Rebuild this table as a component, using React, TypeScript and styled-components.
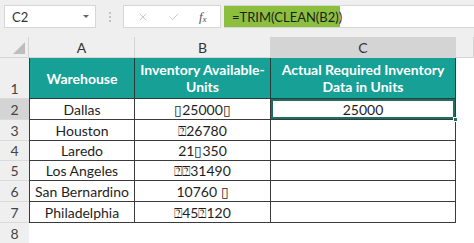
import React from "react"
import styled, { createGlobalStyle, css } from "styled-components"
import { X, Check } from "lucide-react"

const GlobalStyle = createGlobalStyle`
    html, body {
        margin: 0;
        padding: 0;
        background: #ffffff;
    }
    * {
        box-sizing: border-box;
    }
`

const Page = styled.div`
    width: 474px;
    height: 243px;
    overflow: hidden;
    background: #efefef;
    font-family: "Lato", "Open Sans", sans-serif;
    color: #222;
`

const FormulaBar = styled.div`
    height: 37px;
    display: flex;
    align-items: flex-start;
    padding: 5px 0 0 4px;
`

const NameBox = styled.div`
    width: 92px;
    height: 23px;
    background: #fff;
    border: 1px solid #d6d6d6;
    display: flex;
    align-items: center;
    justify-content: space-between;
    padding: 0 6px 0 7px;
    font-size: 13px;
    color: #333;
`

const Arrow = styled.span`
    width: 0;
    height: 0;
    border-left: 3px solid transparent;
    border-right: 3px solid transparent;
    border-top: 3px solid #666;
`

const Dots = styled.div`
    width: 27px;
    height: 23px;
    display: flex;
    flex-direction: column;
    align-items: center;
    justify-content: center;
    gap: 2px;

    span {
        width: 2px;
        height: 2px;
        border-radius: 50%;
        background: #b4b4b4;
    }
`

const ButtonBox = styled.div`
    width: 98px;
    height: 23px;
    background: #fff;
    border: 1px solid #d6d6d6;
    display: flex;
    align-items: center;
    justify-content: space-around;
    padding: 0 4px;
    color: #b5b5b5;
`

const Fx = styled.span`
    font-family: "Liberation Serif", serif;
    font-style: italic;
    font-size: 13px;
    color: #555;

    sub {
        font-size: 9px;
        vertical-align: -1px;
    }
`

const FormulaInput = styled.div`
    flex: 1;
    height: 23px;
    margin-left: 3px;
    background: #fff;
    border-top: 1px solid #d6d6d6;
    border-bottom: 1px solid #d6d6d6;
    display: flex;
`

const Highlight = styled.span`
    width: 116px;
    height: 100%;
    background: #8cbf3e;
    display: flex;
    align-items: center;
    padding-left: 8px;
    font-size: 13px;
    color: #1e1e1e;
`

const Sheet = styled.div`
    display: grid;
    grid-template-columns: 29px 106px 136px 185px 1fr;
    grid-template-rows: 21px 41px 21px 21px 20px 20px 21px 21px 21px;
`

type CellKind = "corner" | "colHead" | "rowHead" | "head" | "data" | "blank"

const Cell = styled.div<{ $kind: CellKind; $selected?: boolean; $first?: boolean; $active?: boolean }>`
    position: relative;
    display: flex;
    align-items: center;
    justify-content: center;
    text-align: center;
    font-size: 14px;
    line-height: 17px;

    ${({ $kind }) => $kind === "corner" && css`
        background: #efefef;
        border-right: 1px solid #d4d4d4;
        border-bottom: 1px solid #d4d4d4;
    `}

    ${({ $kind }) => $kind === "colHead" && css`
        background: #efefef;
        border-right: 1px solid #d4d4d4;
        border-bottom: 1px solid #d4d4d4;
        color: #333;
        font-size: 14px;
    `}

    ${({ $kind }) => $kind === "rowHead" && css`
        background: #efefef;
        border-bottom: 1px solid #dadada;
        color: #444;
        font-size: 14px;
        align-items: flex-end;
        padding-bottom: 1px;
    `}

    ${({ $kind }) => $kind === "head" && css`
        background: #17a096;
        color: #fff;
        font-weight: 700;
        border-right: 1px solid #2b3d3b;
        border-bottom: 1px solid #2b3d3b;
    `}

    ${({ $kind }) => $kind === "data" && css`
        background: #fff;
        color: #1e1e1e;
        border-right: 1px solid #3a3a3a;
        border-bottom: 1px solid #3a3a3a;
    `}

    ${({ $kind }) => $kind === "blank" && css`
        background: #fff;
    `}

    ${({ $first }) => $first && css`
        border-left: 1px solid #3a3a3a;
    `}

    ${({ $selected }) => $selected && css`
        background: #d4d4d4;
    `}

    ${({ $active }) => $active && css`
        box-shadow: inset 0 0 0 2px #1f6e62;
    `}
`

const Handle = styled.span`
    position: absolute;
    right: -3px;
    bottom: -3px;
    width: 5px;
    height: 5px;
    background: #1f6e62;
    border: 1px solid #fff;
    z-index: 2;
`

const Triangle = styled.span`
    position: absolute;
    right: 3px;
    bottom: 3px;
    width: 0;
    height: 0;
    border-left: 12px solid transparent;
    border-bottom: 12px solid #bdbdbd;
`

const rows: [string, string][] = [
    ["Dallas", "\u25AF25000\u25AF"],
    ["Houston", "\u237026780"],
    ["Laredo", "21\u25AF350"],
    ["Los Angeles", "\u2370\u237031490"],
    ["San Bernardino", "10760 \u25AF"],
    ["Philadelphia", "\u237045\u2370120"],
]

export default function App() {
    return (
        <Page>
            <GlobalStyle />
            <FormulaBar>
                <NameBox>
                    C2
                    <Arrow />
                </NameBox>
                <Dots>
                    <span />
                    <span />
                    <span />
                </Dots>
                <ButtonBox>
                    <X size={12} strokeWidth={1.5} />
                    <Check size={12} strokeWidth={1.5} />
                    <Fx>f<sub>x</sub></Fx>
                </ButtonBox>
                <FormulaInput>
                    <Highlight>=TRIM(CLEAN(B2))</Highlight>
                </FormulaInput>
            </FormulaBar>
            <Sheet>
                <Cell $kind="corner"><Triangle /></Cell>
                <Cell $kind="colHead">A</Cell>
                <Cell $kind="colHead">B</Cell>
                <Cell $kind="colHead" $selected>C</Cell>
                <Cell $kind="colHead" />

                <Cell $kind="rowHead">1</Cell>
                <Cell $kind="head" $first>Warehouse</Cell>
                <Cell $kind="head">Inventory Available-<br />Units</Cell>
                <Cell $kind="head">Actual Required Inventory<br />Data in Units</Cell>
                <Cell $kind="blank" />

                {rows.map(([city, raw], i) => (
                    <React.Fragment key={city}>
                        <Cell $kind="rowHead" $selected={i === 0}>{i + 2}</Cell>
                        <Cell $kind="data" $first>{city}</Cell>
                        <Cell $kind="data">{raw}</Cell>
                        <Cell $kind="data" $active={i === 0}>
                            {i === 0 ? "25000" : ""}
                            {i === 0 && <Handle />}
                        </Cell>
                        <Cell $kind="blank" />
                    </React.Fragment>
                ))}

                <Cell $kind="rowHead">8</Cell>
                <Cell $kind="blank" />
                <Cell $kind="blank" />
                <Cell $kind="blank" />
                <Cell $kind="blank" />
            </Sheet>
        </Page>
    )
}
